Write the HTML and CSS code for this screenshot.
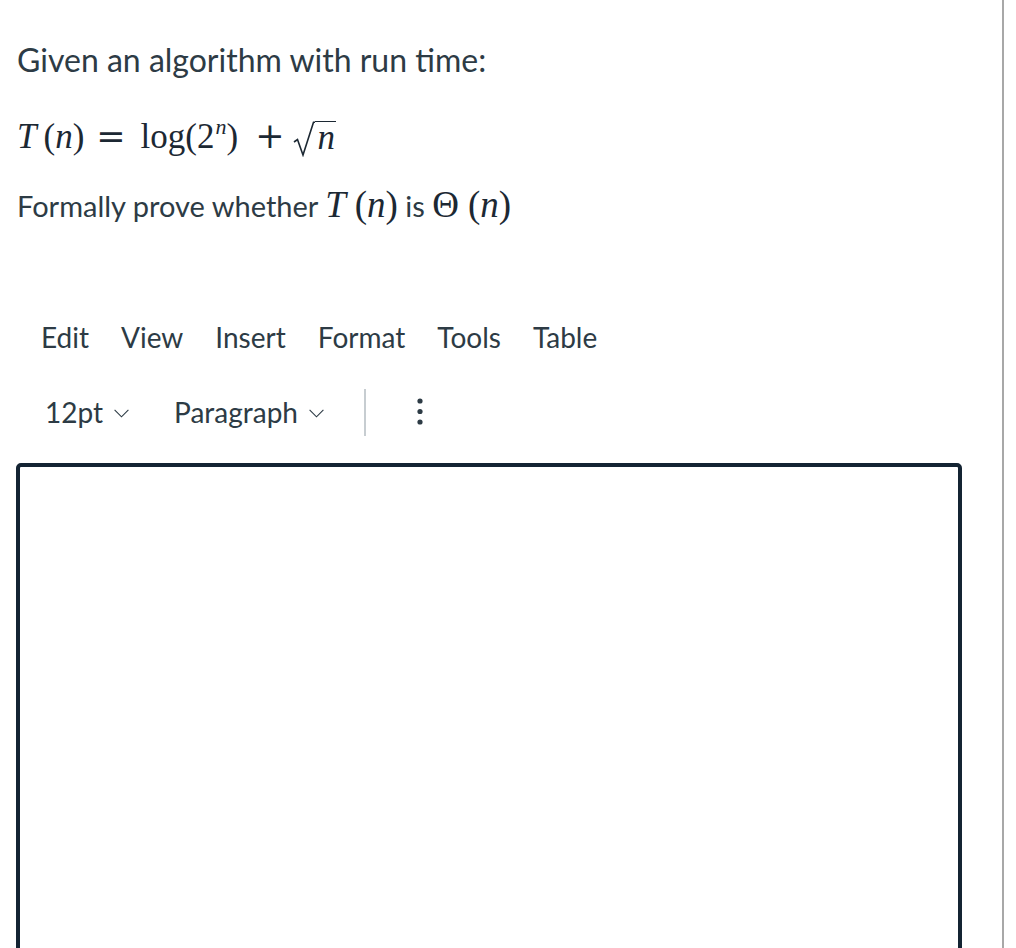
FILE: index.html
```html
<!DOCTYPE html>
<html lang="en">
<head>
    <meta charset="UTF-8">
    <title>Question</title>
    <link rel="stylesheet" href="styles.css">
</head>
<body>
<div class="page">
    <div class="question">
        <p class="q-text">Given an algorithm with run time:</p>
        <p class="q-formula">
            <span class="math"><i>T</i><span class="sp"></span>(<i>n</i>)<span class="op">=</span>log(2<sup><i>n</i></sup>)<span class="op op-plus">+</span><span class="sqrt"><svg class="radical" width="22" height="36" viewBox="0 0 22 36"><path d="M1 21 L4.5 18.5 L10 34 L20.5 1.2 L22 1.2" fill="none" stroke="#1c2833" stroke-width="1.6" stroke-linejoin="miter"/></svg><span class="radicand"><i>n</i></span></span></span>
        </p>
        <p class="q-text q-small">Formally prove whether <span class="math math-big"><i>T</i><span class="sp"></span>(<i>n</i>)</span> is <span class="math math-big">Θ<span class="sp"></span>(<i>n</i>)</span></p>
    </div>

    <div class="editor">
        <div class="menubar">
            <span class="menu-item">Edit</span>
            <span class="menu-item">View</span>
            <span class="menu-item">Insert</span>
            <span class="menu-item">Format</span>
            <span class="menu-item">Tools</span>
            <span class="menu-item">Table</span>
        </div>
        <div class="toolbar">
            <span class="tb-select">12pt
                <svg class="chevron" width="15" height="9" viewBox="0 0 15 9"><path d="M0.6 0.8 L7.5 7.8 L14.4 0.8" fill="none" stroke="#2d3b45" stroke-width="1.1"/></svg>
            </span>
            <span class="tb-select">Paragraph
                <svg class="chevron" width="15" height="9" viewBox="0 0 15 9"><path d="M0.6 0.8 L7.5 7.8 L14.4 0.8" fill="none" stroke="#2d3b45" stroke-width="1.1"/></svg>
            </span>
            <span class="tb-sep"></span>
            <span class="tb-more">
                <svg width="6" height="28" viewBox="0 0 6 28"><circle cx="3" cy="3" r="2.6" fill="#2d3b45"/><circle cx="3" cy="13.5" r="2.6" fill="#2d3b45"/><circle cx="3" cy="24" r="2.6" fill="#2d3b45"/></svg>
            </span>
        </div>
        <div class="edit-area"></div>
    </div>
</div>
</body>
</html>
```

FILE: styles.css
```css
html, body {
    margin: 0;
    padding: 0;
    background: #fff;
}

body {
    font-family: Lato, "Open Sans", sans-serif;
    color: #2d3b45;
    overflow: hidden;
}

.page {
    width: 1002px;
    min-height: 948px;
    border-right: 2px solid #a8a8a8;
}

.question {
    padding: 40px 0 0 17px;
}

.q-text {
    font-size: 32px;
    line-height: 40px;
    margin: 0 0 36px 0;
}

.q-small {
    font-size: 29px;
}

.q-formula {
    margin: 0 0 23px 0;
    line-height: 40px;
}

.math {
    font-family: "Liberation Serif", "DejaVu Serif", serif;
    font-size: 35px;
    color: #1c2833;
}

.math-big {
    font-size: 37px;
}

.math i {
    font-style: italic;
}

.math .sp {
    display: inline-block;
    width: 7px;
}

.math-big .sp {
    width: 9px;
}

.math .op {
    display: inline-block;
    font-family: "DejaVu Serif", serif;
    margin: 0 15px 0 12px;
}

.math .op-plus {
    margin: 0 9px 0 17px;
}

.math sup {
    font-size: 22px;
    vertical-align: 14px;
    line-height: 0;
    margin-left: 1px;
}

.sqrt {
    display: inline-flex;
    align-items: flex-start;
    vertical-align: -9px;
}

.radical {
    display: block;
}

.radicand {
    display: inline-block;
    border-top: 1.6px solid #1c2833;
    margin-top: 0.4px;
    line-height: 32px;
    padding: 0 1px 0 2px;
}

.editor {
    padding-top: 58px;
}

.menubar {
    display: flex;
    padding-left: 41px;
    font-size: 28px;
    line-height: 34px;
}

.menu-item {
    margin-right: 32px;
}

.toolbar {
    display: flex;
    align-items: center;
    padding-left: 45px;
    margin-top: 34px;
    font-size: 28px;
    height: 48px;
}

.tb-select {
    display: flex;
    align-items: center;
    margin-right: 45px;
}

.chevron {
    margin-left: 11px;
    margin-top: 2px;
}

.tb-sep {
    width: 2px;
    height: 47px;
    background: #c7cdd1;
    margin: 0 51px 0 -5px;
}

.tb-more {
    display: flex;
    align-items: center;
}

.edit-area {
    margin: 27px 0 0 16px;
    width: 946px;
    height: 600px;
    box-sizing: border-box;
    border: 4px solid #142433;
    border-radius: 5px;
}
```
